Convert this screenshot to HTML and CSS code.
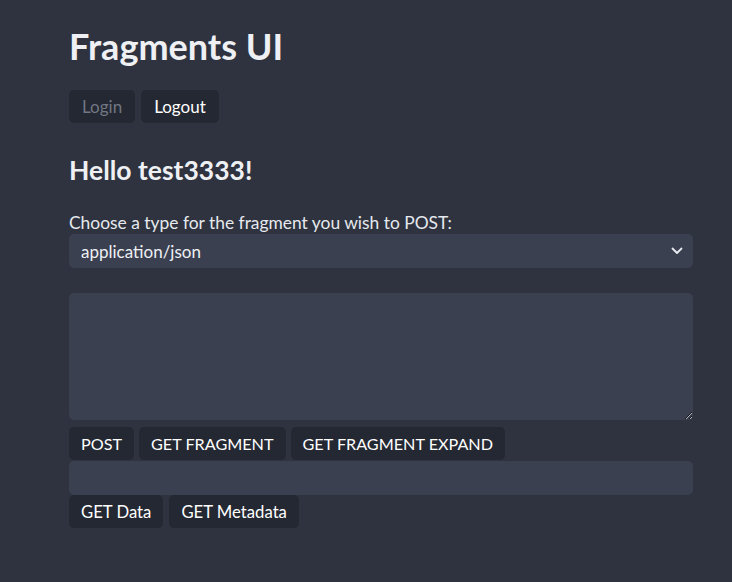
FILE: index.html
```html
<!DOCTYPE html>
<html lang="en">
<head>
<meta charset="utf-8">
<title>Fragments UI</title>
<link rel="stylesheet" href="styles.css">
</head>
<body>
<main class="page">
  <h1 class="title">Fragments UI</h1>
  <div class="btn-row auth">
    <button class="btn" disabled>Login</button>
    <button class="btn">Logout</button>
  </div>
  <h2 class="hello">Hello test3333!</h2>
  <label class="label" for="type">Choose a type for the fragment you wish to POST:</label>
  <div class="select-wrap">
    <select id="type" class="select">
      <option>application/json</option>
    </select>
    <svg class="chevron" width="12" height="8" viewBox="0 0 12 8"><path d="M1.5 1.5 L6 6 L10.5 1.5" fill="none" stroke="#e6e9ef" stroke-width="1.8" stroke-linecap="round" stroke-linejoin="round"/></svg>
  </div>
  <textarea class="area"></textarea>
  <div class="btn-row actions">
    <button class="btn">POST</button>
    <button class="btn">GET FRAGMENT</button>
    <button class="btn">GET FRAGMENT EXPAND</button>
  </div>
  <input class="field" type="text">
  <div class="btn-row data">
    <button class="btn">GET Data</button>
    <button class="btn">GET Metadata</button>
  </div>
</main>
</body>
</html>
```
FILE: styles.css
```css
html, body {
  margin: 0;
  padding: 0;
  background: #2e333f;
  color: #e6e9ee;
  font-family: "Lato", "Open Sans", sans-serif;
  font-size: 16px;
}
.page {
  width: 624px;
  margin-left: 69px;
  padding-top: 20px;
  display: flex;
  flex-direction: column;
  align-items: stretch;
}
.title {
  margin: 0;
  font-size: 36px;
  line-height: 52px;
  font-weight: 700;
  color: #eef0f4;
}
.btn-row {
  display: flex;
  gap: 5px;
}
.auth {
  margin-top: 18px;
  gap: 6px;
}
.btn {
  height: 33px;
  padding: 0 12px;
  border: none;
  border-radius: 5px;
  background: #242832;
  color: #ffffff;
  font-family: inherit;
  font-size: 16.2px;
}
.auth .btn {
  padding: 0 13px;
  font-size: 17px;
}
.data {
  gap: 6px;
}
.data .btn {
  font-size: 16.7px;
}
.btn:disabled {
  color: #727784;
}
.hello {
  margin: 32px 0 0;
  font-size: 26.5px;
  line-height: 30px;
  font-weight: 700;
  color: #eef0f4;
}
.label {
  margin-top: 26px;
  line-height: 23px;
  font-size: 17.4px;
}
.select-wrap {
  position: relative;
}
.select {
  width: 100%;
  height: 34px;
  appearance: none;
  -webkit-appearance: none;
  border: none;
  border-radius: 5px;
  background: #3b4050;
  color: #eef0f4;
  font-family: inherit;
  font-size: 17px;
  padding: 0 12px;
  outline: none;
}
.chevron {
  position: absolute;
  right: 10px;
  top: 13px;
}
.area {
  margin-top: 25px;
  height: 127px;
  box-sizing: border-box;
  border: none;
  border-radius: 5px;
  background: #3b4050;
  color: #eef0f4;
  font-family: inherit;
  font-size: 16px;
  padding: 8px 12px;
  resize: vertical;
  outline: none;
}
.actions {
  margin-top: 7px;
}
.field {
  margin-top: 1px;
  height: 34px;
  box-sizing: border-box;
  border: none;
  border-radius: 5px;
  background: #3b4050;
  color: #eef0f4;
  font-family: inherit;
  font-size: 16px;
  padding: 0 12px;
  outline: none;
}
.field + .btn-row {
  margin-top: 0;
}
```
